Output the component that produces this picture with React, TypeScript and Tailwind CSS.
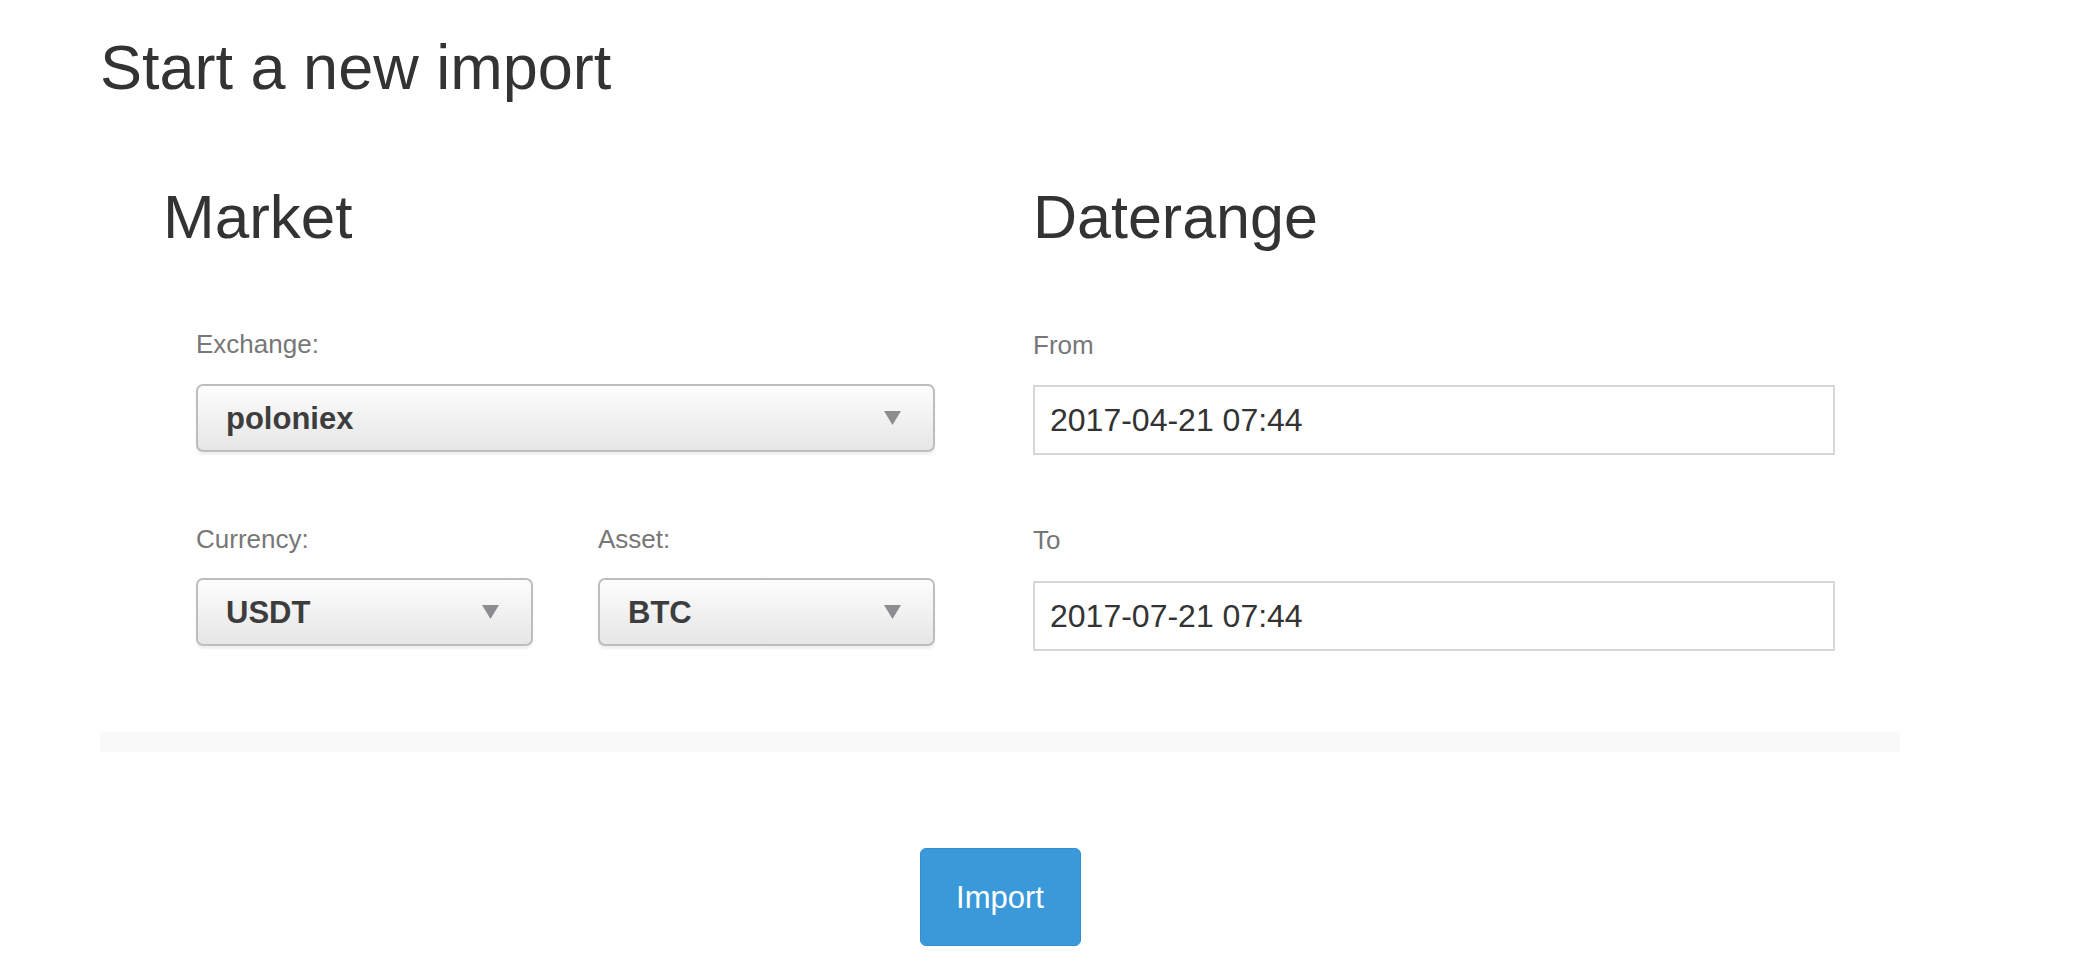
import React from "react";

const font = { fontFamily: '"Liberation Sans", Arial, Helvetica, sans-serif' };

function Arrow() {
  return (
    <svg width="17" height="14" viewBox="0 0 17 14" className="shrink-0">
      <polygon points="0,0 17,0 8.5,14" fill="#8d8d8f" />
    </svg>
  );
}

function Select({ value }: { value: string }) {
  return (
    <div className="flex h-[68px] items-center justify-between rounded-[7px] border-2 border-[#bdbdbd] bg-gradient-to-b from-[#fdfdfd] to-[#e6e6e6] pl-[28px] pr-[32px] shadow-[0_3px_2px_rgba(0,0,0,0.06)]">
      <span className="text-[31px] font-bold leading-[31px] text-[#3d3d3d]">{value}</span>
      <Arrow />
    </div>
  );
}

function Label({ children }: { children: React.ReactNode }) {
  return <div className="h-[26px] text-[26px] leading-[26px] text-[#777777]">{children}</div>;
}

function DateInput({ value }: { value: string }) {
  return (
    <div className="flex h-[70px] w-[802px] items-center border-2 border-[#d7d7d7] bg-white px-[15px]">
      <span className="text-[32px] leading-[32px] text-[#333333]">{value}</span>
    </div>
  );
}

export default function App() {
  return (
    <div className="min-h-[978px] w-[2082px] bg-white" style={font}>
      <div className="ml-[100px] w-[1800px]">
        <h1 className="mt-[36px] h-[62px] text-[63px] font-normal leading-[62px] text-[#333333]">
          Start a new import
        </h1>

        <div className="mt-[88px] flex">
          {/* Market column */}
          <div className="w-[933px]">
            <h2 className="h-[62px] pl-[63px] text-[62px] font-normal leading-[62px] text-[#333333]">Market</h2>
            <div className="ml-[96px] w-[739px]">
              <div className="mt-[83px]">
                <Label>Exchange:</Label>
                <div className="mt-[27px]">
                  <Select value="poloniex" />
                </div>
              </div>
              <div className="mt-[74px] grid grid-cols-2 gap-[65px]">
                <div>
                  <Label>Currency:</Label>
                  <div className="mt-[26px]">
                    <Select value="USDT" />
                  </div>
                </div>
                <div>
                  <Label>Asset:</Label>
                  <div className="mt-[26px]">
                    <Select value="BTC" />
                  </div>
                </div>
              </div>
            </div>
          </div>

          {/* Daterange column */}
          <div className="flex-1">
            <h2 className="h-[62px] text-[61px] font-normal leading-[62px] text-[#333333]">Daterange</h2>
            <div className="mt-[84px]">
              <Label>From</Label>
              <div className="mt-[27px]">
                <DateInput value="2017-04-21 07:44" />
              </div>
            </div>
            <div className="mt-[72px]">
              <Label>To</Label>
              <div className="mt-[28px]">
                <DateInput value="2017-07-21 07:44" />
              </div>
            </div>
          </div>
        </div>

        <div className="mt-[81px] h-[20px] w-[1800px] bg-[#f9f9f9]" />

        <div className="mt-[96px] flex justify-center">
          <button className="flex h-[98px] w-[161px] items-center justify-center rounded-[6px] border border-[#3290d2] bg-[#3a99d9] text-[31px] leading-[31px] text-white">
            Import
          </button>
        </div>
      </div>
    </div>
  );
}
